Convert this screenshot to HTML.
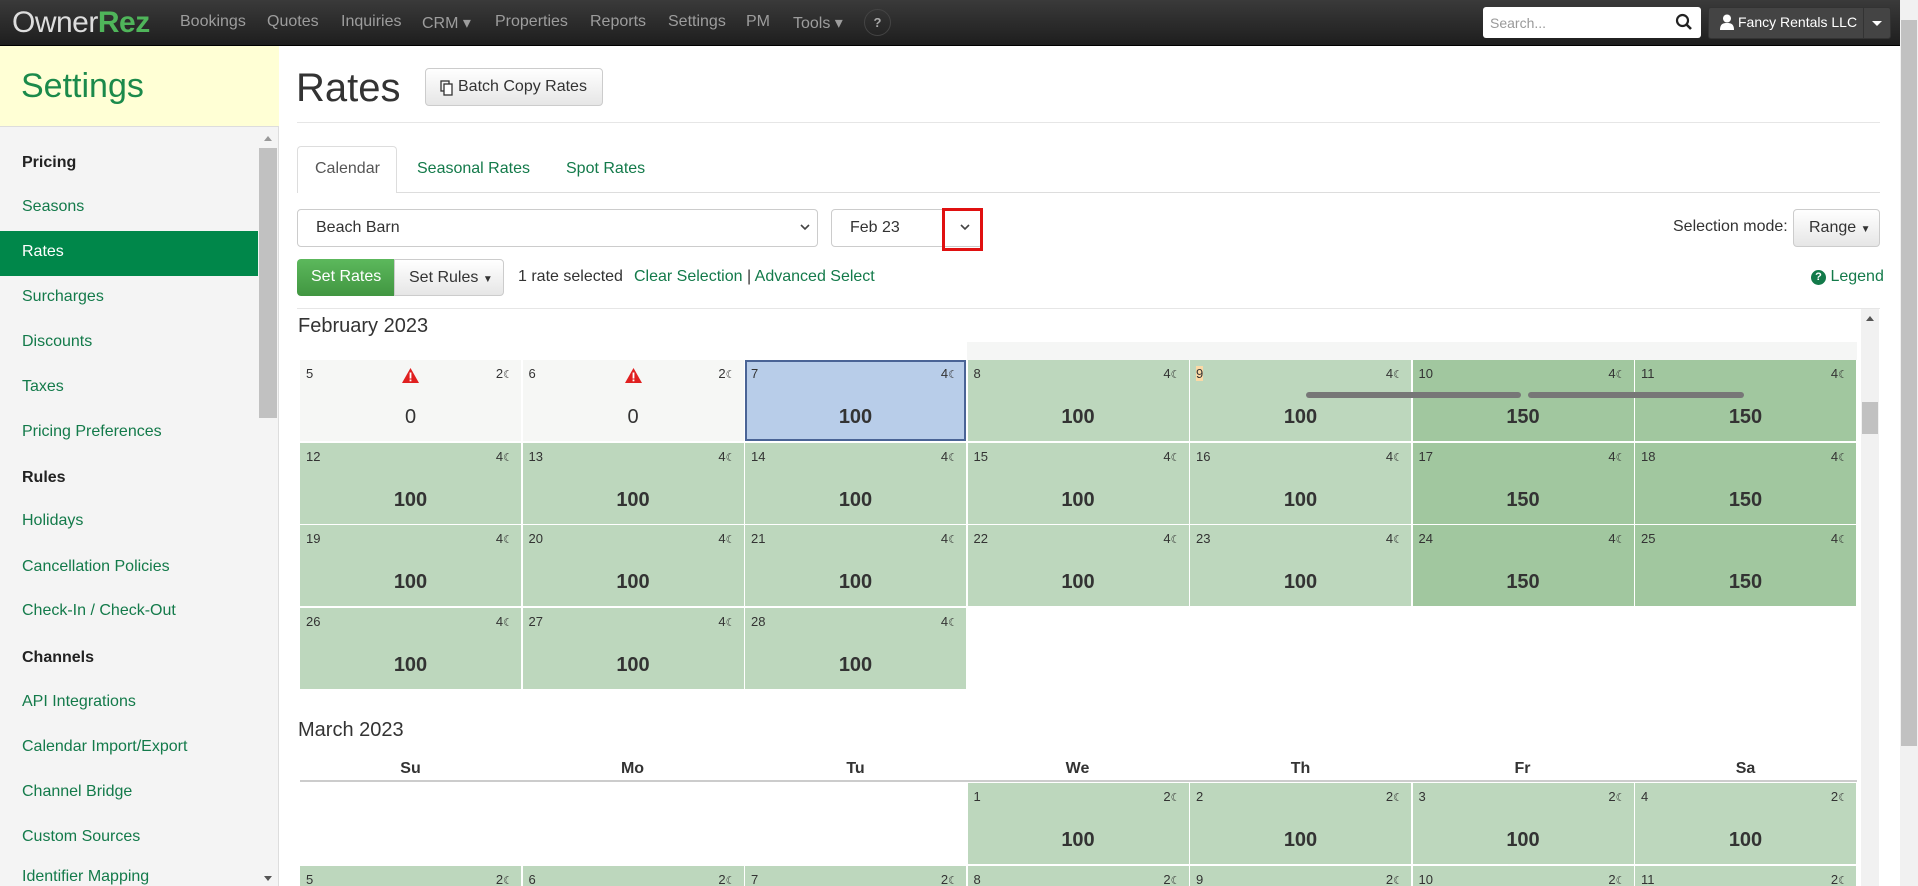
<!DOCTYPE html>
<html><head><meta charset="utf-8">
<style>
*{box-sizing:border-box;margin:0;padding:0}
html{width:1918px;height:886px;overflow:hidden}
body{width:1918px;height:886px;overflow:hidden;font-family:"Liberation Sans",Arial,sans-serif;background:#fff;position:relative;color:#333}
#wrap{position:absolute;left:0;top:0;width:1918px;height:886px;overflow:hidden}
.a{position:absolute}
.nav{left:0;top:0;width:1900px;height:46px;background:linear-gradient(#3a3a3a,#1e1e1e);border-bottom:1px solid #000}
.nl{top:13px;color:#9d9d9d;font-size:16px}
.side{left:0;top:46px;width:279px;height:840px;background:#f4f4f4;border-right:1px solid #ddd}
.si{left:22px;font-size:16px;color:#137a4a}
.sh{left:22px;font-size:16px;font-weight:bold;color:#222}
.btn{border:1px solid #ccc;border-radius:4px;background:linear-gradient(#fff,#e6e6e6);font-size:16px;color:#333}
.cell{position:absolute;width:221px;height:81px;background:#bdd7bd;overflow:hidden}
.cell .d{position:absolute;left:6px;top:6px;font-size:13px;color:#333}
.cell .n{position:absolute;right:8px;top:6px;font-size:13px;color:#333}
.cell .p{position:absolute;left:0;right:0;top:46px;text-align:center;font-size:20px;font-weight:bold;color:#333}
.dk{background:#a1c79f}
.gr{background:#f6f7f5}
.gr .p{font-weight:normal}
.sel{background:#b8cde9;border:2px solid #4a6496}
.sel .d{left:4px;top:4px}.sel .n{right:6px;top:4px}.sel .p{top:44px}
.wd{top:760px;font-size:16px;font-weight:bold;width:221px;text-align:center;color:#333}
</style></head><body><div id="wrap">
<div class="a nav"></div>
<div class="a" style="left:12px;top:6px;font-size:30px;color:#ddd;letter-spacing:-0.5px">Owner<b style="color:#4fb55a">Rez</b></div>
<div class="a nl" style="left:180px">Bookings</div>
<div class="a nl" style="left:267px">Quotes</div>
<div class="a nl" style="left:341px">Inquiries</div>
<div class="a nl" style="left:422px">CRM ▾</div>
<div class="a nl" style="left:495px">Properties</div>
<div class="a nl" style="left:590px">Reports</div>
<div class="a nl" style="left:668px">Settings</div>
<div class="a nl" style="left:746px">PM</div>
<div class="a nl" style="left:793px">Tools ▾</div>
<div class="a" style="left:864px;top:9px;width:27px;height:27px;border-radius:50%;border:1px solid #444;color:#aaa;font-size:13px;font-weight:bold;text-align:center;line-height:25px">?</div>
<div class="a" style="left:1483px;top:7px;width:218px;height:31px;background:#fff;border-radius:3px;font-size:14px;color:#999;padding:8px 7px">Search...</div>
<svg class="a" style="left:1675px;top:13px" width="18" height="18" viewBox="0 0 18 18"><circle cx="7.5" cy="7.5" r="5.5" fill="none" stroke="#222" stroke-width="2.2"/><path d="M11.5 11.5L16 16" stroke="#222" stroke-width="2.6"/></svg>
<div class="a" style="left:1708px;top:7px;width:183px;height:32px;background:#444;border:1px solid #333;border-radius:3px"></div>
<div class="a" style="left:1863px;top:7px;width:1px;height:32px;background:#333"></div>
<svg class="a" style="left:1720px;top:14px" width="14" height="16" viewBox="0 0 14 16"><circle cx="7" cy="4.5" r="4" fill="#fff"/><path d="M0 16C0 10 3 9 7 9S14 10 14 16Z" fill="#fff"/></svg>
<div class="a" style="left:1738px;top:14px;font-size:14px;color:#fff">Fancy Rentals LLC</div>
<div class="a" style="left:1872px;top:21px;border-left:5px solid transparent;border-right:5px solid transparent;border-top:5px solid #fff"></div>
<div class="a" style="left:1900px;top:0;width:18px;height:886px;background:#f1f1f1"></div>
<div class="a" style="left:1901px;top:20px;width:16px;height:726px;background:#c1c1c1"></div>

<div class="a side"></div>
<div class="a" style="left:0;top:46px;width:279px;height:81px;background:#ffffd5;border-bottom:1px solid #ddd"></div>
<div class="a" style="left:21px;top:67px;font-size:34px;color:#1b8a4b">Settings</div>
<div class="a" style="left:259px;top:148px;width:18px;height:270px;background:#c1c1c1"></div>
<div class="a" style="left:264px;top:136px;border-left:4px solid transparent;border-right:4px solid transparent;border-bottom:5px solid #999"></div>
<div class="a" style="left:264px;top:876px;border-left:4px solid transparent;border-right:4px solid transparent;border-top:5px solid #555"></div>
<div class="a" style="left:0;top:231px;width:258px;height:45px;background:#00874a"></div>
<div class="a sh" style="top:154px">Pricing</div>
<div class="a si" style="top:198px">Seasons</div>
<div class="a si" style="top:243px;color:#fff">Rates</div>
<div class="a si" style="top:288px">Surcharges</div>
<div class="a si" style="top:333px">Discounts</div>
<div class="a si" style="top:378px">Taxes</div>
<div class="a si" style="top:423px">Pricing Preferences</div>
<div class="a sh" style="top:469px">Rules</div>
<div class="a si" style="top:512px">Holidays</div>
<div class="a si" style="top:558px">Cancellation Policies</div>
<div class="a si" style="top:602px">Check-In / Check-Out</div>
<div class="a sh" style="top:649px">Channels</div>
<div class="a si" style="top:693px">API Integrations</div>
<div class="a si" style="top:738px">Calendar Import/Export</div>
<div class="a si" style="top:783px">Channel Bridge</div>
<div class="a si" style="top:828px">Custom Sources</div>
<div class="a si" style="top:868px;height:18px;overflow:hidden">Identifier Mapping</div>

<div class="a" style="left:296px;top:66px;font-size:40px;color:#333">Rates</div>
<div class="a btn" style="left:425px;top:68px;width:178px;height:38px;padding:9px 0 0 15px">
<svg style="position:absolute;left:14px;top:11px" width="14" height="16" viewBox="0 0 14 16"><rect x="1" y="1" width="8" height="10" fill="none" stroke="#333" stroke-width="1.3"/><rect x="4" y="4" width="8" height="11" fill="#fff" stroke="#333" stroke-width="1.3"/></svg>
<span style="margin-left:17px">Batch Copy Rates</span></div>
<div class="a" style="left:297px;top:122px;width:1583px;height:1px;background:#e6e6e6"></div>

<div class="a" style="left:297px;top:192px;width:1583px;height:1px;background:#ddd"></div>
<div class="a" style="left:297px;top:146px;width:100px;height:47px;background:#fff;border:1px solid #ddd;border-bottom:none;border-radius:4px 4px 0 0"></div>
<div class="a" style="left:315px;top:160px;font-size:16px;color:#555">Calendar</div>
<div class="a" style="left:417px;top:160px;font-size:16px;color:#137a4a">Seasonal Rates</div>
<div class="a" style="left:566px;top:160px;font-size:16px;color:#137a4a">Spot Rates</div>

<div class="a" style="left:297px;top:209px;width:521px;height:38px;border:1px solid #ccc;border-radius:4px;font-size:16px;padding:9px 0 0 18px">Beach Barn</div>
<svg class="a" style="left:800px;top:223px" width="10" height="8"><path d="M1 2L5 6L9 2" fill="none" stroke="#444" stroke-width="1.6"/></svg>
<div class="a" style="left:831px;top:209px;width:152px;height:38px;border:1px solid #ccc;border-radius:4px;font-size:16px;padding:9px 0 0 18px">Feb 23</div>
<svg class="a" style="left:960px;top:223px" width="10" height="8"><path d="M1 2L5 6L9 2" fill="none" stroke="#444" stroke-width="1.6"/></svg>
<div class="a" style="left:942px;top:208px;width:41px;height:43px;border:3px solid #e01010"></div>
<div class="a" style="left:1673px;top:218px;font-size:16px;color:#333">Selection mode:</div>
<div class="a btn" style="left:1793px;top:209px;width:87px;height:38px;padding:9px 0 0 15px">Range <span style="font-size:10px">▼</span></div>

<div class="a" style="left:297px;top:259px;width:98px;height:37px;background:linear-gradient(#5cb85c,#419641);border-radius:4px 0 0 4px;color:#fff;font-size:16px;padding:9px 0 0 14px">Set Rates</div>
<div class="a btn" style="left:394px;top:259px;width:110px;height:37px;border-radius:0 4px 4px 0;padding:9px 0 0 14px">Set Rules <span style="font-size:10px">▼</span></div>
<div class="a" style="left:518px;top:268px;font-size:16px;color:#333">1 rate selected</div>
<div class="a" style="left:634px;top:268px;font-size:16px;color:#137a4a">Clear Selection <span style="color:#333">|</span> Advanced Select</div>
<div class="a" style="left:1811px;top:268px;font-size:16px;color:#137a4a"><span style="display:inline-block;width:15px;height:15px;border-radius:50%;background:#137a4a;color:#fff;font-size:11px;font-weight:bold;text-align:center;line-height:15px;vertical-align:1px">?</span> Legend</div>
<div class="a" style="left:297px;top:308px;width:1583px;height:1px;background:#e6e6e6"></div>

<div class="a" style="left:1861px;top:309px;width:18px;height:577px;background:#f1f1f1"></div>
<div class="a" style="left:1862px;top:402px;width:16px;height:32px;background:#c1c1c1"></div>
<div class="a" style="left:1866px;top:316px;border-left:4px solid transparent;border-right:4px solid transparent;border-bottom:5px solid #555"></div>

<div class="a" style="left:298px;top:315px;font-size:20px;color:#333">February 2023</div>
<div class="a" style="left:967px;top:342px;width:890px;height:18px;background:#f5f6f5"></div>

<div id="g"></div>
<div class="a" style="left:298px;top:719px;font-size:20px;color:#333">March 2023</div>
<div class="a wd" style="left:300px">Su</div>
<div class="a wd" style="left:522px">Mo</div>
<div class="a wd" style="left:745px">Tu</div>
<div class="a wd" style="left:967px">We</div>
<div class="a wd" style="left:1190px">Th</div>
<div class="a wd" style="left:1412px">Fr</div>
<div class="a wd" style="left:1635px">Sa</div>
<div class="a" style="left:300px;top:780px;width:1557px;height:2px;background:#ccc"></div>

<div class="a" style="left:1306px;top:392px;width:215px;height:6px;border-radius:3px;background:#777;z-index:2"></div>
<div class="a" style="left:1528px;top:392px;width:216px;height:6px;border-radius:3px;background:#777;z-index:2"></div>
</div>
<script>
var X=[];for(var i=0;i<7;i++)X.push(300+i*222.5);
var moon='<span style="font-size:11px">&#9790;</span>';
function cell(c,y,d,n,p,cls,warn,h2){
 var h='<div class="cell '+(cls||'')+'" style="left:'+X[c]+'px;top:'+y+'px'+(h2?';height:'+h2+'px':'')+'"><span class="d">'+d+'</span><span class="n">'+n+moon+'</span>';
 if(warn)h+='<svg style="position:absolute;left:102px;top:8px" width="17" height="15" viewBox="0 0 17 15"><path d="M8.5 0L17 15H0Z" fill="#e02020"/><rect x="7.6" y="4.5" width="1.8" height="6" fill="#fff"/><rect x="7.6" y="11.5" width="1.8" height="1.8" fill="#fff"/></svg>';
 if(!h2)h+='<span class="p">'+p+'</span>';
 h+='</div>';return h;}
var s='';
var R=[360,442.5,525,607.5];
s+=cell(0,R[0],5,2,0,'gr',1)+cell(1,R[0],6,2,0,'gr',1)+cell(2,R[0],7,4,100,'sel')+cell(3,R[0],8,4,100)+cell(4,R[0],'<span style="background:#fbd9a6">9</span>',4,100)+cell(5,R[0],10,4,150,'dk')+cell(6,R[0],11,4,150,'dk');
for(var r=1;r<4;r++){for(var c=0;c<7;c++){var d=5+r*7+c;if(d>28)break;s+=cell(c,R[r],d,4,c>=5?150:100,c>=5?'dk':'');}}
for(var c=3;c<7;c++)s+=cell(c,783,c-2,2,100);
for(var c=0;c<7;c++)s+=cell(c,866,5+c,2,100,'',0,20);
document.getElementById('g').innerHTML=s;
</script>
</body></html>
